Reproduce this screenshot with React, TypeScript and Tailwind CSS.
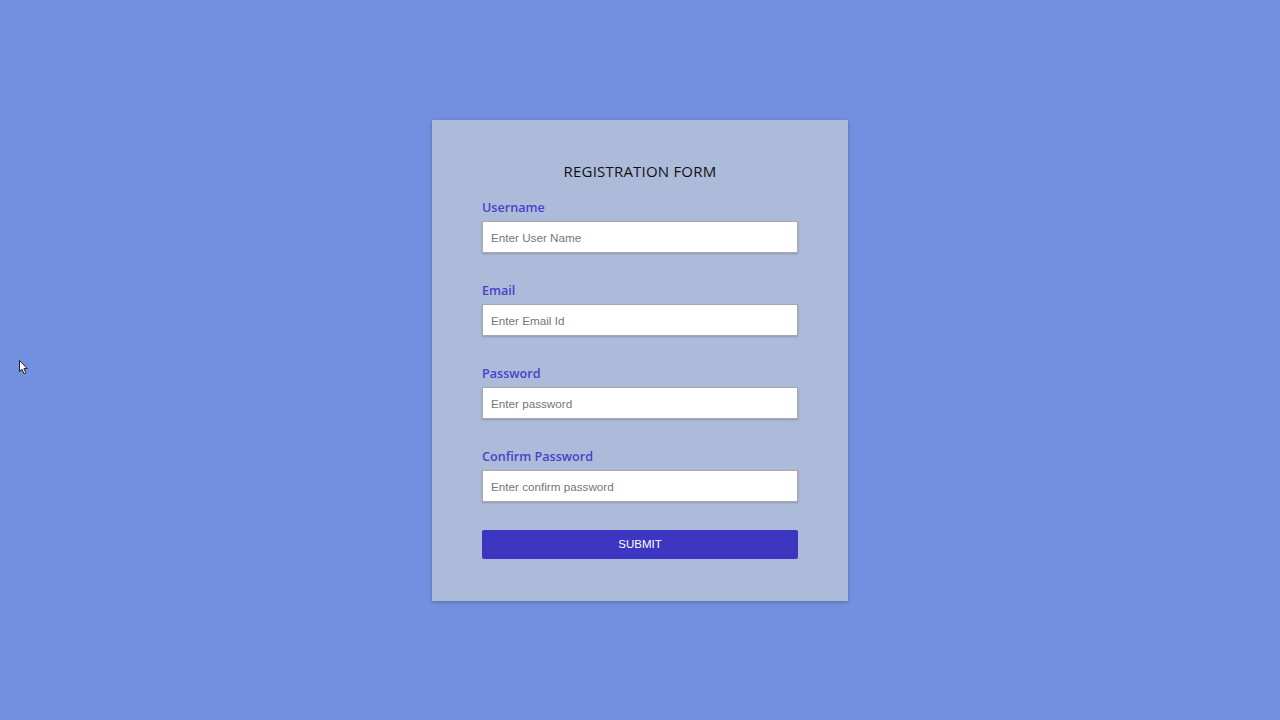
import React from 'react';

const FIELDS = [
  { label: 'Username', type: 'text', placeholder: 'Enter User Name' },
  { label: 'Email', type: 'email', placeholder: 'Enter Email Id' },
  { label: 'Password', type: 'password', placeholder: 'Enter password' },
  { label: 'Confirm Password', type: 'password', placeholder: 'Enter confirm password' },
];

const App: React.FC = () => {
  return (
    <div className="relative min-h-screen w-full bg-[#7390e0] flex items-start justify-center pt-[120px]">
      {/* mouse cursor left in the screenshot */}
      <svg className="absolute left-[19px] top-[360px]" width="10" height="15" viewBox="0 0 10 15">
        <path d="M0.5 0.5 L0.5 11.5 L3 9.2 L5 13.8 L6.8 13 L4.9 8.6 L8.3 8.6 Z" fill="#fff" stroke="#222" strokeWidth="1" strokeLinejoin="round" />
      </svg>

      <div className="w-[416px] bg-[#adbbdb] shadow-[0_1px_4px_rgba(0,0,0,0.25)] px-[50px] pt-[41px] pb-[42px]">
        <h1 className="text-center text-[15px] leading-[20px] text-[#111] tracking-[0.2px] font-['Open_Sans',sans-serif]">
          REGISTRATION FORM
        </h1>
        <form className="mt-[17px] flex flex-col gap-[28px]" onSubmit={(e) => e.preventDefault()}>
          {FIELDS.map((f) => (
            <div key={f.label} className="flex flex-col">
              <label className="text-[12.6px] leading-[20px] font-semibold text-[#4b40c8] mb-[3px] font-['Open_Sans',sans-serif]">
                {f.label}
              </label>
              <input
                type={f.type}
                placeholder={f.placeholder}
                className="h-[32px] w-full bg-white border border-[#a9a9a9] shadow-[0_1px_2px_rgba(0,0,0,0.2)] px-[8px] text-[11.7px] text-black placeholder:text-[#767676] outline-none font-['Liberation_Sans',Arial,sans-serif]"
              />
            </div>
          ))}
          <button
            type="submit"
            className="h-[29px] w-full rounded-[2px] bg-[#3c36c1] text-white text-[11.5px] font-['Liberation_Sans',Arial,sans-serif]"
          >
            SUBMIT
          </button>
        </form>
      </div>
    </div>
  );
};

export default App;
